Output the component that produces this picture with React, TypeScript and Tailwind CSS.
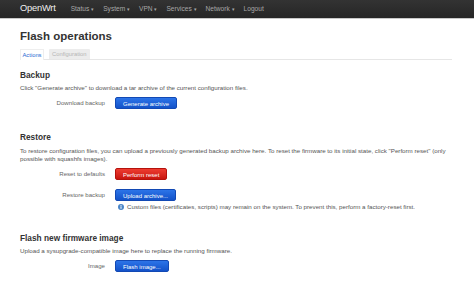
import React from 'react'

const navItems = ['Status', 'System', 'VPN', 'Services', 'Network']

function Btn({ children, red }: { children: React.ReactNode; red?: boolean }) {
  return (
    <button
      className={`h-[12px] px-[7px] rounded-[2px] text-white text-[6px] leading-[12px] border ${
        red
          ? 'bg-gradient-to-b from-[#ee3b30] to-[#c8140d] border-[#b5120c]'
          : 'bg-gradient-to-b from-[#2c74e8] to-[#1352c9] border-[#1249b4]'
      }`}
    >
      {children}
    </button>
  )
}

function Row({ label, children }: { label: string; children: React.ReactNode }) {
  return (
    <div className="grid grid-cols-[85px_1fr] gap-x-[10px] items-center">
      <div className="text-right text-[6.1px] text-[#666]">{label}</div>
      <div className="flex items-center">{children}</div>
    </div>
  )
}

export default function App() {
  return (
    <div className="w-[474px] h-[289px] bg-white overflow-hidden font-['Liberation_Sans',Arial,sans-serif] text-[#404040]">
      {/* header */}
      <div className="h-[19px] bg-gradient-to-b from-[#333] to-[#262626] border-b border-[#c9c9c9] flex items-center pl-[20px]">
        <span className="text-[9.3px] text-[#eee] tracking-[-0.2px] mr-[15px]">OpenWrt</span>
        <div className="flex items-center gap-[9px] text-[6.6px] text-[#a8a8a8]">
          {navItems.map(n => (
            <span key={n}>
              {n} <span className="text-[5px]">▾</span>
            </span>
          ))}
          <span>Logout</span>
        </div>
      </div>

      <div className="px-[20px]">
        <h1 className="mt-[10px] text-[11.5px] leading-[14px] font-bold text-[#333]">Flash operations</h1>

        {/* tabs */}
        <div className="mt-[6px] h-[11px] flex items-end border-b border-[#e6e6e6] mr-[2px]">
          <div className="h-[11px] px-[1.5px] mr-[5px] text-[5.8px] leading-[10px] text-[#1f66d1] bg-white border border-b-0 border-[#eee] -mb-[1px]">
            Actions
          </div>
          <div className="h-[10px] px-[3px] text-[5.8px] leading-[10px] text-[#b5b5b5] bg-[#ececec] rounded-t-[1px]">
            Configuration
          </div>
        </div>

        {/* Backup */}
        <h2 className="mt-[10px] text-[8.3px] leading-[10px] font-bold text-[#333]">Backup</h2>
        <p className="mt-[4px] text-[6.2px] leading-[8px] text-[#555]">
          Click "Generate archive" to download a tar archive of the current configuration files.
        </p>
        <div className="mt-[5px]">
          <Row label="Download backup">
            <Btn>Generate archive</Btn>
          </Row>
        </div>

        {/* Restore */}
        <h2 className="mt-[23px] text-[8.3px] leading-[10px] font-bold text-[#333]">Restore</h2>
        <p className="mt-[5px] text-[6.2px] leading-[8.3px] text-[#555] pr-[2px]">
          To restore configuration files, you can upload a previously generated backup archive here. To reset the firmware to its initial state, click "Perform reset" (only possible with squashfs images).
        </p>
        <div className="mt-[4px]">
          <Row label="Reset to defaults">
            <Btn red>Perform reset</Btn>
          </Row>
        </div>
        <div className="mt-[9px]">
          <Row label="Restore backup">
            <Btn>Upload archive...</Btn>
          </Row>
        </div>
        <div className="grid grid-cols-[85px_1fr] gap-x-[10px] mt-[2px]">
          <div />
          <div className="flex items-center gap-[3px] pl-[3px] text-[6.2px] leading-[8px] text-[#555]">
            <svg width="6" height="6" viewBox="0 0 12 12">
              <circle cx="6" cy="6" r="6" fill="#4a86c8" />
              <rect x="5" y="5" width="2" height="4.5" fill="#fff" />
              <circle cx="6" cy="3.3" r="1.1" fill="#fff" />
            </svg>
            <span>Custom files (certificates, scripts) may remain on the system. To prevent this, perform a factory-reset first.</span>
          </div>
        </div>

        {/* Flash */}
        <h2 className="mt-[22px] text-[8.3px] leading-[10px] font-bold text-[#333]">Flash new firmware image</h2>
        <p className="mt-[4px] text-[6.2px] leading-[8px] text-[#555]">
          Upload a sysupgrade-compatible image here to replace the running firmware.
        </p>
        <div className="mt-[5px]">
          <Row label="Image">
            <Btn>Flash image...</Btn>
          </Row>
        </div>
      </div>
    </div>
  )
}
